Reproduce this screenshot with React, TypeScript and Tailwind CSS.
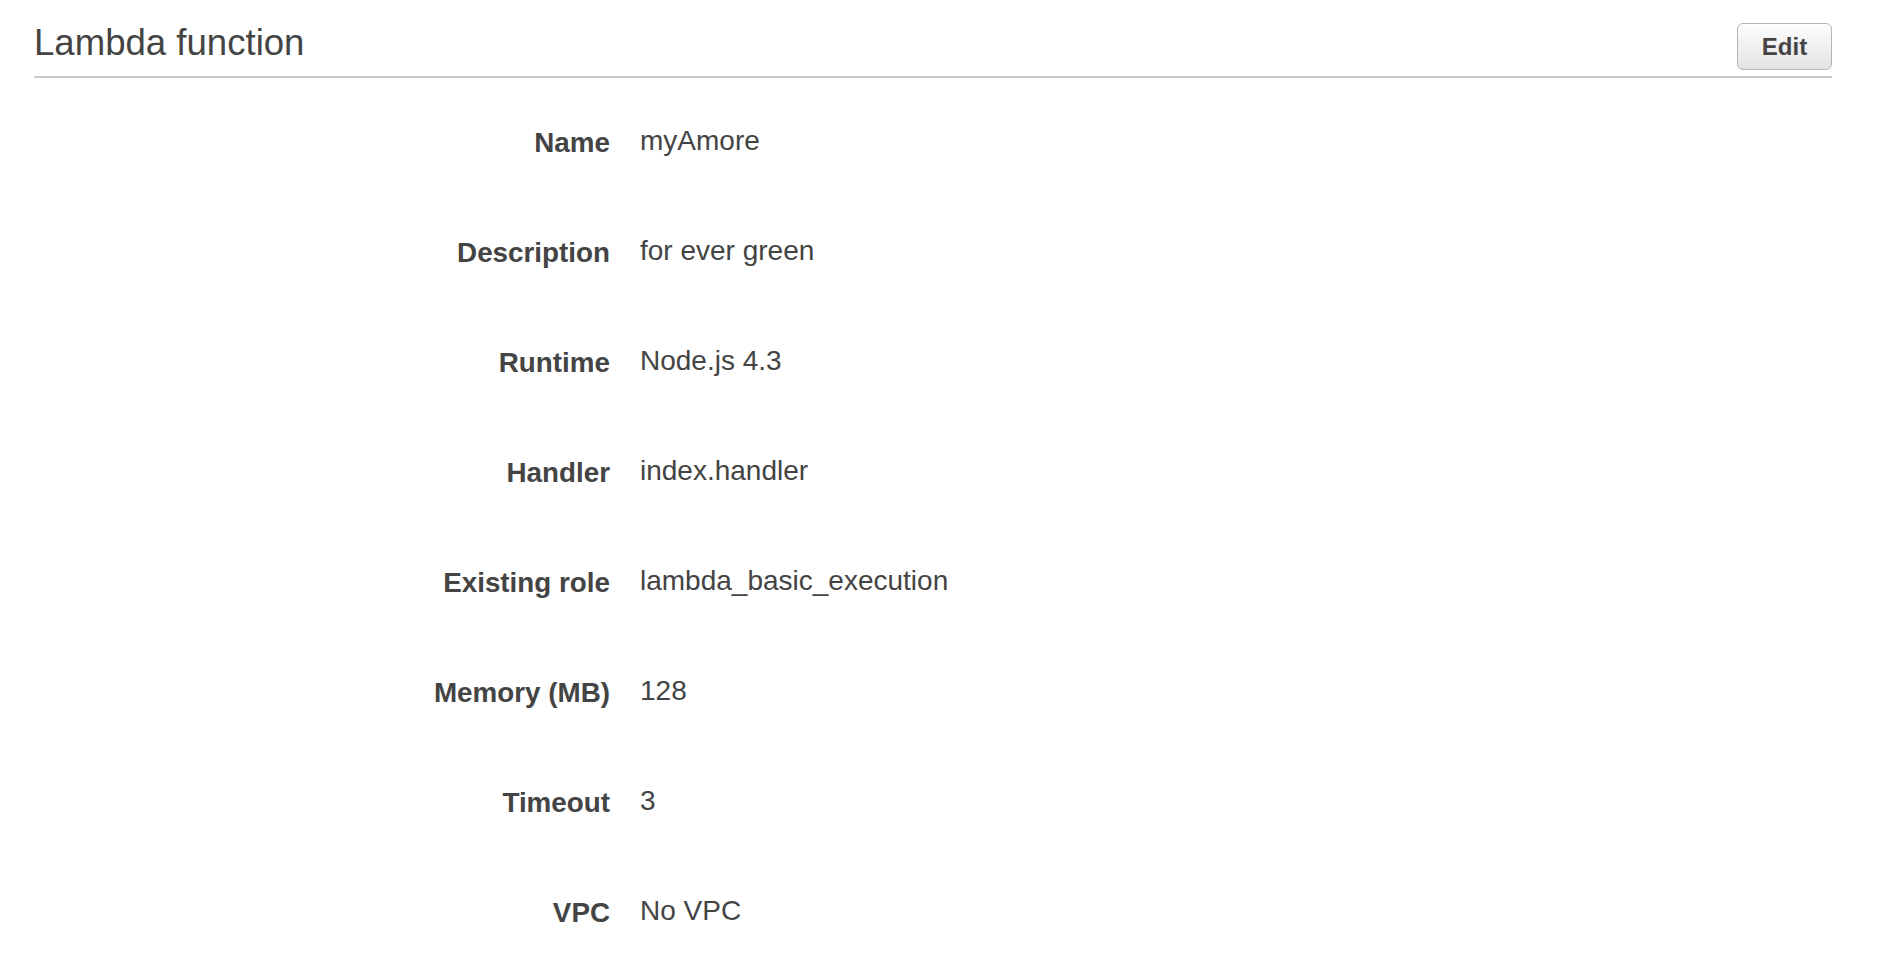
const rows: [string, string][] = [
  ["Name", "myAmore"],
  ["Description", "for ever green"],
  ["Runtime", "Node.js 4.3"],
  ["Handler", "index.handler"],
  ["Existing role", "lambda_basic_execution"],
  ["Memory (MB)", "128"],
  ["Timeout", "3"],
  ["VPC", "No VPC"],
];

export default function App() {
  return (
    <div className="min-h-screen bg-white pl-[34px] pr-[56px] text-[#444] font-['Liberation_Sans',Arial,sans-serif]">
      <div className="flex items-end justify-between border-b-2 border-[#ccc] pb-[6px] pt-[23px]">
        <h2 className="mb-[8px] text-[36.6px] leading-none font-normal">Lambda function</h2>
        <button className="h-[47px] w-[95px] rounded-[6px] border border-[#b5b5b5] bg-gradient-to-b from-[#fdfdfd] to-[#e4e4e4] text-[24px] font-bold text-[#444] shadow-[inset_0_1px_0_#fff]">
          Edit
        </button>
      </div>
      <div className="pt-[8px]">
        {rows.map(([label, value]) => (
          <div key={label} className="grid h-[110px] grid-cols-[576px_1fr] items-center gap-x-[30px]">
            <div className="text-right text-[27.8px] font-bold leading-none translate-y-[2px]">{label}</div>
            <div className="text-[28px] leading-none">{value}</div>
          </div>
        ))}
      </div>
    </div>
  );
}
